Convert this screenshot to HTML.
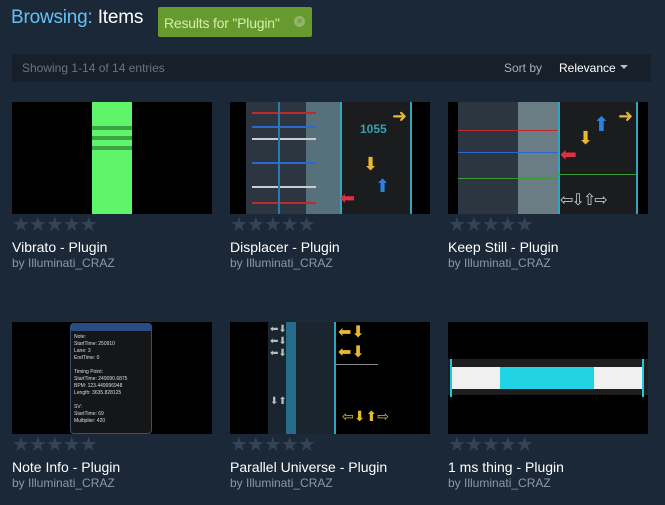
<!DOCTYPE html>
<html><head><style>
*{margin:0;padding:0;box-sizing:border-box}
body{width:665px;height:505px;background:#1b2838;font-family:"Liberation Sans",Arial,sans-serif;position:relative;overflow:hidden}
.abs{position:absolute}
.h{left:11px;top:7px;font-size:19px;color:#fff;letter-spacing:-0.2px}
.h span{color:#66c0f4}
.tag{left:158px;top:7px;width:154px;height:30px;background:#679a2e;border-radius:2px;color:#d2efa9;font-size:14px;padding:8px 0 0 6px;letter-spacing:-0.2px}
.x{position:absolute;right:7px;top:9px;width:11px;height:11px;border-radius:50%;background:#92b56a;color:#679a2e;font-size:9px;line-height:11px;text-align:center;font-weight:bold}
.bar{left:12px;top:54px;width:639px;height:28px;background:#171f2a;font-size:12px}
.card{width:200px}
.img{width:200px;height:112px;background:#000;position:relative;overflow:hidden}
.stars{margin-top:3px;height:16px;color:#354356;font-size:20px;line-height:16px;letter-spacing:-1px}
.t{color:#fff;font-size:14px;margin-top:6px}
.by{color:#8f98a0;font-size:12px;margin-top:1px}
.i{position:absolute}
</style></head><body>
<div class="abs h"><span>Browsing:</span> Items</div>
<div class="abs tag">Results for "Plugin"<div class="x">×</div></div>
<div class="abs bar"><span class="abs" style="left:10px;top:7px;color:#6b7580">Showing 1-14 of 14 entries</span><span class="abs" style="left:492px;top:7px;color:#a8b1b9">Sort by</span><span class="abs" style="left:547px;top:7px;color:#fff">Relevance</span><span class="abs" style="left:608px;top:11px;border-left:4px solid transparent;border-right:4px solid transparent;border-top:4px solid #b8bcbf"></span></div>

<div class="abs card" style="left:12px;top:102px"><div class="img"><div class="i" style="left:80px;top:0;width:40px;height:112px;background:#5ef56a"></div><div class="i" style="left:80px;top:24px;width:40px;height:4px;background:#3ca346"></div><div class="i" style="left:80px;top:34px;width:40px;height:4px;background:#3ca346"></div><div class="i" style="left:80px;top:44px;width:40px;height:4px;background:#3ca346"></div></div><div class="stars">★★★★★</div><div class="t">Vibrato - Plugin</div><div class="by">by Illuminati_CRAZ</div></div>

<div class="abs card" style="left:230px;top:102px"><div class="img"><div class="i" style="left:16px;width:92px;height:112px;background:#2b3640"></div><div class="i" style="left:76px;width:34px;height:112px;background:#56707c"></div><div class="i" style="left:110px;top:0;height:112px;background:#1a1c1e;width:72px"></div><div class="i" style="left:110px;width:2px;height:112px;background:#2ea6c0"></div><div class="i" style="left:180px;width:2px;height:112px;background:#2ea6c0"></div><div class="i" style="left:22px;top:10px;width:64px;height:2px;background:#c02a2a"></div><div class="i" style="left:22px;top:24px;width:64px;height:2px;background:#2a6ad0"></div><div class="i" style="left:22px;top:36px;width:64px;height:2px;background:#ccc"></div><div class="i" style="left:22px;top:60px;width:64px;height:2px;background:#2a6ad0"></div><div class="i" style="left:22px;top:84px;width:64px;height:2px;background:#ccc"></div><div class="i" style="left:22px;top:100px;width:64px;height:2px;background:#c02a2a"></div><div class="i" style="left:48px;top:0;width:2px;height:112px;background:#2a7ab0"></div><div class="i" style="left:130px;top:20px;color:#3aa0b0;font-weight:bold;font-size:12px">1055</div><div class="i" style="left:162px;top:4px;color:#e8b830;font-size:18px">➜</div><div class="i" style="left:133px;top:52px;color:#e8b830;font-size:18px">⬇</div><div class="i" style="left:145px;top:74px;color:#2c80e0;font-size:18px">⬆</div><div class="i" style="left:110px;top:86px;color:#e03040;font-size:18px">⬅</div></div><div class="stars">★★★★★</div><div class="t">Displacer - Plugin</div><div class="by">by Illuminati_CRAZ</div></div>

<div class="abs card" style="left:448px;top:102px"><div class="img"><div class="i" style="left:10px;width:60px;height:112px;background:#2b3640"></div><div class="i" style="left:70px;width:40px;height:112px;background:#6b7d84"></div><div class="i" style="left:110px;width:80px;height:112px;background:#1a1c1e"></div><div class="i" style="left:110px;width:2px;height:112px;background:#2ea6c0"></div><div class="i" style="left:188px;width:2px;height:112px;background:#2ea6c0"></div><div class="i" style="left:10px;top:28px;width:100px;height:1px;background:#c02a2a"></div><div class="i" style="left:10px;top:50px;width:100px;height:1px;background:#2a6ad0"></div><div class="i" style="left:10px;top:76px;width:100px;height:1px;background:#3a9a3a"></div><div class="i" style="left:110px;top:72px;width:78px;height:1px;background:#3a9a3a"></div><div class="i" style="left:145px;top:10px;color:#2c80e0;font-size:20px">⬆</div><div class="i" style="left:170px;top:4px;color:#e8b830;font-size:18px">➜</div><div class="i" style="left:112px;top:40px;color:#e03040;font-size:20px">⬅</div><div class="i" style="left:130px;top:26px;color:#e8b830;font-size:18px">⬇</div><div class="i" style="left:112px;top:88px;color:#ccc;font-size:16px;letter-spacing:-2px">⇦⇩⇧⇨</div></div><div class="stars">★★★★★</div><div class="t">Keep Still - Plugin</div><div class="by">by Illuminati_CRAZ</div></div>

<div class="abs card" style="left:12px;top:322px"><div class="img"><div class="i" style="left:58px;top:1px;width:82px;height:111px;background:#141617;border:1px solid #3a5070;border-radius:4px"></div><div class="i" style="left:58px;top:1px;width:82px;height:8px;background:#2a4c80;border-radius:4px 4px 0 0"></div><div class="i" style="left:62px;top:12px;color:#ddd;font-size:5px;line-height:7px">Note:<br>StartTime: 250910<br>Lane: 3<br>EndTime: 0<br><br>Timing Point:<br>StartTime: 249090.6875<br>BPM: 123.449996948<br>Length: 3635.828125<br><br>SV:<br>StartTime: 69<br>Multiplier: 420</div></div><div class="stars">★★★★★</div><div class="t">Note Info - Plugin</div><div class="by">by Illuminati_CRAZ</div></div>

<div class="abs card" style="left:230px;top:322px"><div class="img"><div class="i" style="left:38px;width:66px;height:112px;background:#1b2530"></div><div class="i" style="left:56px;width:10px;height:112px;background:#2a8ab0;opacity:.7"></div><div class="i" style="left:104px;width:2px;height:112px;background:#2ea6c0"></div><div class="i" style="left:106px;top:42px;width:42px;height:1px;background:#888"></div><div class="i" style="left:108px;top:0;color:#e8b830;font-size:16px">⬅⬇</div><div class="i" style="left:108px;top:20px;color:#e8b830;font-size:16px">⬅⬇</div><div class="i" style="left:112px;top:86px;color:#e8b830;font-size:14px">⇦⬇⬆⇨</div><div class="i" style="left:40px;top:2px;color:#bbb;font-size:10px;line-height:12px">⬅⬇<br>⬅⬇<br>⬅⬇<br><br><br><br>⬇⬆</div></div><div class="stars">★★★★★</div><div class="t">Parallel Universe - Plugin</div><div class="by">by Illuminati_CRAZ</div></div>

<div class="abs card" style="left:448px;top:322px"><div class="img"><div class="i" style="left:0;top:37px;width:200px;height:36px;background:#1e1e1e"></div><div class="i" style="left:4px;top:45px;width:190px;height:22px;background:#f0f0f0"></div><div class="i" style="left:52px;top:45px;width:94px;height:22px;background:#22d3e4"></div><div class="i" style="left:2px;top:37px;width:2px;height:38px;background:#22c8e0"></div><div class="i" style="left:194px;top:37px;width:2px;height:38px;background:#22c8e0"></div></div><div class="stars">★★★★★</div><div class="t">1 ms thing - Plugin</div><div class="by">by Illuminati_CRAZ</div></div>
</body></html>
